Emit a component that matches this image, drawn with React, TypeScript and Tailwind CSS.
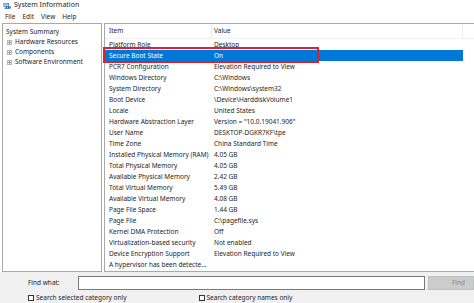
const ROWS: [string, string][] = [
  ['Platform Role', 'Desktop'],
  ['Secure Boot State', 'On'],
  ['PCR7 Configuration', 'Elevation Required to View'],
  ['Windows Directory', 'C:\\Windows'],
  ['System Directory', 'C:\\Windows\\system32'],
  ['Boot Device', '\\Device\\HarddiskVolume1'],
  ['Locale', 'United States'],
  ['Hardware Abstraction Layer', 'Version = "10.0.19041.906"'],
  ['User Name', 'DESKTOP-DGKR7KF\\tpe'],
  ['Time Zone', 'China Standard Time'],
  ['Installed Physical Memory (RAM)', '4.05 GB'],
  ['Total Physical Memory', '4.05 GB'],
  ['Available Physical Memory', '2.42 GB'],
  ['Total Virtual Memory', '5.49 GB'],
  ['Available Virtual Memory', '4.08 GB'],
  ['Page File Space', '1.44 GB'],
  ['Page File', 'C:\\pagefile.sys'],
  ['Kernel DMA Protection', 'Off'],
  ['Virtualization-based security', 'Not enabled'],
  ['Device Encryption Support', 'Elevation Required to View'],
  ['A hypervisor has been detecte...', ''],
];

const TREE = ['Hardware Resources', 'Components', 'Software Environment'];

function AppIcon() {
  return (
    <svg width="8" height="8" viewBox="0 0 16 16">
      <rect x="1" y="2" width="11" height="8" fill="#2a6fc9" />
      <rect x="2" y="3" width="9" height="6" fill="#9cc8f2" />
      <rect x="5" y="10" width="3" height="2" fill="#556" />
      <rect x="3" y="12" width="7" height="1.5" fill="#556" />
      <circle cx="12.5" cy="11" r="3.2" fill="#1d5fb8" />
      <rect x="12" y="10.5" width="1" height="3" fill="#fff" />
      <rect x="12" y="8.7" width="1" height="1" fill="#fff" />
    </svg>
  );
}

// tree "+" box
function Expander() {
  return (
    <span className="w-[5px] h-[5px] border border-[#b5b5b5] flex items-center justify-center mr-[3px]">
      <span className="relative w-[3px] h-[3px]">
        <span className="absolute left-0 top-[1px] w-[3px] h-px bg-[#999]" />
        <span className="absolute top-0 left-[1px] w-px h-[3px] bg-[#999]" />
      </span>
    </span>
  );
}

function Checkbox({ label }: { label: string }) {
  return (
    <div className="flex items-center gap-[2px]">
      <span className="w-[6px] h-[6px] border border-[#333] bg-white" />
      <span>{label}</span>
    </div>
  );
}

export default function App() {
  return (
    <div
      className="w-[474px] h-[303px] bg-white overflow-hidden text-[6.5px] text-[#1e1e1e] flex flex-col"
      style={{ fontFamily: '"Noto Sans", "Open Sans", sans-serif' }}
    >
      {/* Title bar */}
      <div className="h-[11px] flex items-center pl-[3px] gap-[3px] text-[7px]">
        <AppIcon />
        <span>System Information</span>
      </div>

      {/* Menu */}
      <div className="h-[12px] flex items-center pl-[5px] gap-[7px]">
        <span>File</span>
        <span>Edit</span>
        <span>View</span>
        <span>Help</span>
      </div>

      {/* Panes */}
      <div className="flex h-[249px] pl-[2px] gap-[2px]">
        <div className="w-[100px] border border-[#a9a9a9] bg-white pt-[3px] pl-[3px]">
          <div className="h-[10px] flex items-center">System Summary</div>
          {TREE.map((t) => (
            <div key={t} className="h-[10px] flex items-center pl-[1px]">
              <Expander />
              {t}
            </div>
          ))}
        </div>

        <div className="relative flex-1 border-l border-t border-b border-[#a9a9a9] bg-white">
          <div className="h-[15px] flex items-center border-b border-[#f0f0f0]">
            <span className="w-[106px] pl-[4px]">Item</span>
            <span className="w-[252px] h-full flex items-center pl-[2px] border-l border-r border-[#ececec]">Value</span>
          </div>
          {ROWS.map(([k, v], i) => (
            <div
              key={k}
              className={`h-[11px] w-[358px] flex items-center ${i === 1 ? 'bg-[#0078d7] text-white' : ''}`}
            >
              <span className="w-[106px] pl-[4px] whitespace-nowrap">{k}</span>
              <span className="pl-[3px] whitespace-nowrap">{v}</span>
            </div>
          ))}
          {/* highlight box */}
          <div className="absolute left-[-2px] top-[23px] w-[216px] h-[16px] border-2 border-[#e0202c]" />
        </div>
      </div>

      {/* Find bar */}
      <div className="flex-1 bg-[#f0f0f0] pl-[28px] pt-[4px]">
        <div className="flex items-center h-[14px]">
          <span className="w-[50px]">Find what:</span>
          <div className="w-[347px] h-[14px] bg-white border border-[#7a7a7a]" />
          <div className="ml-[3px] flex-1 h-[14px] bg-[#cccccc] border border-[#bfbfbf] flex items-center justify-end pr-[8px] text-[#8a8a8a]">
            Find
          </div>
        </div>
        <div className="flex items-center mt-[3px] gap-[72px]">
          <Checkbox label="Search selected category only" />
          <Checkbox label="Search category names only" />
        </div>
      </div>
    </div>
  );
}
